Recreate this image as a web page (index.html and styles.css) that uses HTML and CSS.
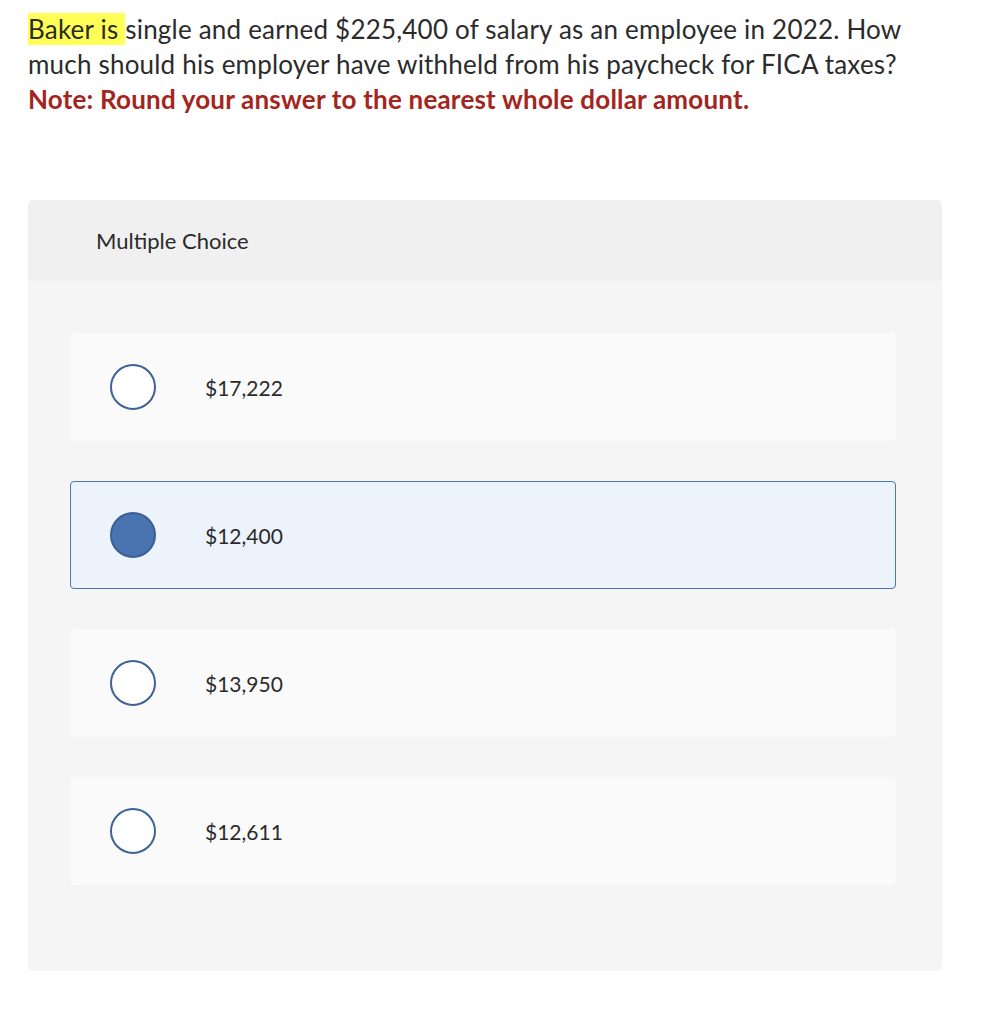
FILE: index.html
```html
<!DOCTYPE html>
<html>
<head>
<meta charset="utf-8">
<link rel="stylesheet" href="styles.css">
</head>
<body>
<div class="question">
  <p class="prompt"><span class="hl">Baker is </span>single and earned $225,400 of salary as an employee in 2022. How much should his employer have withheld from his paycheck for FICA taxes?</p>
  <p class="note">Note: Round your answer to the nearest whole dollar amount.</p>
</div>
<div class="card">
  <div class="card-head">Multiple Choice</div>
  <div class="card-body">
    <div class="option"><span class="radio"></span><span class="label">$17,222</span></div>
    <div class="option selected"><span class="radio"></span><span class="label">$12,400</span></div>
    <div class="option"><span class="radio"></span><span class="label">$13,950</span></div>
    <div class="option"><span class="radio"></span><span class="label">$12,611</span></div>
  </div>
</div>
</body>
</html>
```
FILE: styles.css
```css
* { box-sizing: border-box; }
body {
  margin: 0;
  background: #fff;
  font-family: "Lato", "Liberation Sans", sans-serif;
  color: #2b2b2b;
}
.question {
  padding: 12px 0 0 28px;
  width: 950px;
}
.prompt, .note {
  margin: 0;
  font-size: 26px;
  line-height: 35px;
  letter-spacing: 0.2px;
}
.hl {
  background: #ffff57;
}
.note {
  color: #a42520;
  font-weight: bold;
}
.card {
  margin: 83px 0 0 28px;
  width: 914px;
  background: #f5f5f5;
  border-radius: 5px;
  overflow: hidden;
}
.card-head {
  background: #f0f0f0;
  height: 81px;
  padding-left: 68px;
  display: flex;
  align-items: center;
  font-size: 22px;
}
.card-body {
  padding: 52px 46px 86px 42px;
  display: flex;
  flex-direction: column;
  gap: 40px;
}
.option {
  height: 108px;
  background: #fafafa;
  border: 1px solid #fafafa;
  border-radius: 4px;
  display: flex;
  align-items: center;
  padding-left: 39px;
}
.option.selected {
  background: #edf3fb;
  border-color: #4a78b6;
}
.radio {
  width: 46px;
  height: 46px;
  border-radius: 50%;
  border: 2px solid #3c6296;
  background: #fff;
  flex: none;
}
.selected .radio {
  background: #4a74b0;
  border-color: #3a5f93;
}
.label {
  margin-left: 49px;
  font-size: 21px;
}
```
